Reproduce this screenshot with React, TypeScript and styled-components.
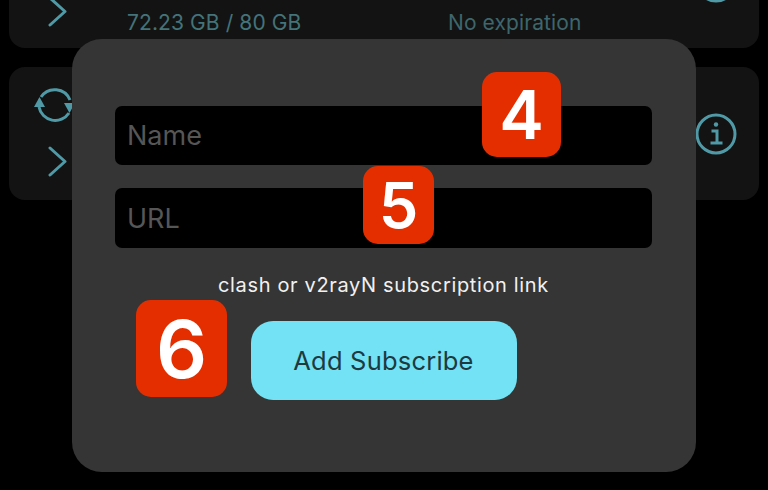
import React from "react";
import styled, { createGlobalStyle } from "styled-components";

const Global = createGlobalStyle`
  html, body { margin: 0; padding: 0; background: #000; }
  body { font-family: Inter, "Noto Sans", "Liberation Sans", sans-serif; }
  * { box-sizing: border-box; }
`;

const Screen = styled.div`
  position: relative;
  width: 768px;
  height: 490px;
  overflow: hidden;
  background: #000;
`;

const List = styled.div`
  display: flex;
  flex-direction: column;
  gap: 19px;
  padding: 0 9px;
`;

const Card = styled.div<{ $h: number }>`
  height: ${(p) => p.$h}px;
  background: #131313;
  border-radius: 0 0 16px 16px;
  &:nth-child(2) { border-radius: 16px; }
  display: flex;
  position: relative;
`;

const LeftIcons = styled.div`
  width: 64px;
  margin-left: 26px;
  display: flex;
  flex-direction: column;
  flex: none;
`;

const TopChevron = styled.svg`
  display: block;
  margin: -4px 0 0 13px;
`;

const Stats = styled.div`
  display: flex;
  padding: 11px 0 0 28px;
  font-size: 21px;
  line-height: 24px;
  letter-spacing: 0.1px;
  color: #3e666c;
`;

const Usage = styled.span`
  width: 321px;
  color: #44737a;
`;

const Refresh = styled.svg`
  display: block;
  margin: 19px 0 0 -1px;
`;

const MidChevron = styled.svg`
  display: block;
  margin: 20px 0 0 13px;
`;

const InfoWrap = styled.div`
  margin-left: auto;
  margin-right: 22px;
  margin-top: 46px;
`;

const PeekInfo = styled.div`
  position: absolute;
  right: 22px;
  top: -39px;
`;

const Modal = styled.div`
  position: absolute;
  left: 72px;
  top: 39px;
  width: 624px;
  height: 433px;
  background: #353535;
  border-radius: 30px;
  padding: 67px 44px 0 43px;
  display: flex;
  flex-direction: column;
  align-items: center;
`;

const Field = styled.input`
  width: 537px;
  flex: none;
  background: #000;
  border: 0;
  border-radius: 7px;
  padding: 0 12px;
  font-family: inherit;
  font-size: 27px;
  color: #fff;
  outline: none;
`;

const NameField = styled(Field)`
  height: 59px;
  margin-bottom: 23px;
  &::placeholder { color: #565656; opacity: 1; }
`;

const UrlField = styled(Field)`
  height: 60px;
  margin-bottom: 23px;
  &::placeholder { color: #565656; opacity: 1; }
`;

const Hint = styled.div`
  font-size: 20px;
  line-height: 28px;
  color: #f1f1f1;
  letter-spacing: 0.65px;
  white-space: nowrap;
`;

const AddButton = styled.button`
  margin-top: 22px;
  width: 266px;
  height: 79px;
  padding: 0;
  background: #72e2f4;
  border: 0;
  border-radius: 22px;
  font-family: inherit;
  font-size: 25.5px;
  color: #1d3a40;
  letter-spacing: 0.2px;
`;

const Badge = styled.div<{ $x: number; $y: number; $w: number; $h: number; $fs: number }>`
  position: absolute;
  left: ${(p) => p.$x}px;
  top: ${(p) => p.$y}px;
  width: ${(p) => p.$w}px;
  height: ${(p) => p.$h}px;
  background: #e52e00;
  border-radius: 15px;
  color: #fff;
  font-weight: 600;
  font-size: ${(p) => p.$fs}px;
  line-height: 1;
  display: flex;
  align-items: center;
  justify-content: center;
`;

const teal = "#4f9aa6";

const InfoIcon = () => (
  <svg width="42" height="42" viewBox="0 0 42 42" fill="none" style={{ display: "block" }}>
    <circle cx="21" cy="21" r="19" stroke={teal} strokeWidth="3" />
    <circle cx="21" cy="11.5" r="2.2" fill={teal} />
    <path d="M16.5 18h5.5v11M15.5 30h12" stroke={teal} strokeWidth="3" />
  </svg>
);

const chevronPath = "M2 2l15 13.5L2 29";

export default function App() {
  return (
    <Screen>
      <Global />
      <List>
        <Card $h={48}>
          <LeftIcons>
            <TopChevron width="19" height="31" viewBox="0 0 19 31" fill="none">
              <path d={chevronPath} stroke={teal} strokeWidth="3" strokeLinecap="round" strokeLinejoin="round" />
            </TopChevron>
          </LeftIcons>
          <Stats>
            <Usage>72.23 GB / 80 GB</Usage>
            <span>No expiration</span>
          </Stats>
          <PeekInfo>
            <InfoIcon />
          </PeekInfo>
        </Card>
        <Card $h={133}>
          <LeftIcons>
            <Refresh width="42" height="40" viewBox="0 0 42 40" fill="none">
              <path d="M7 11A16.5 16.5 0 0 1 36 14" stroke={teal} strokeWidth="3" />
              <path d="M5 21A16.5 16.5 0 0 0 35 27" stroke={teal} strokeWidth="3" />
              <path d="M5.5 11l-5.5 10h11z" fill={teal} />
              <path d="M35.5 27l5.5-10H30z" fill={teal} />
            </Refresh>
            <MidChevron width="19" height="31" viewBox="0 0 19 31" fill="none">
              <path d={chevronPath} stroke={teal} strokeWidth="3" strokeLinecap="round" strokeLinejoin="round" />
            </MidChevron>
          </LeftIcons>
          <InfoWrap>
            <InfoIcon />
          </InfoWrap>
        </Card>
      </List>
      <Modal>
        <NameField placeholder="Name" readOnly />
        <UrlField placeholder="URL" readOnly />
        <Hint>clash or v2rayN subscription link</Hint>
        <AddButton>Add Subscribe</AddButton>
      </Modal>
      <Badge $x={482} $y={72} $w={79} $h={85} $fs={67}>4</Badge>
      <Badge $x={363} $y={166} $w={71} $h={78} $fs={63}>5</Badge>
      <Badge $x={136} $y={300} $w={91} $h={97} $fs={80}>6</Badge>
    </Screen>
  );
}
